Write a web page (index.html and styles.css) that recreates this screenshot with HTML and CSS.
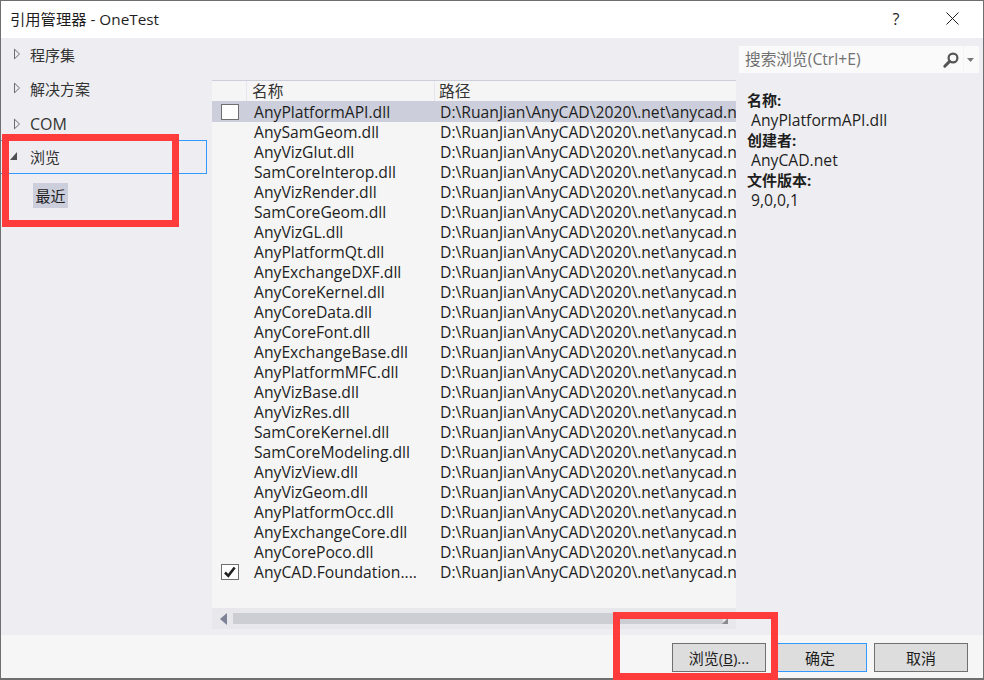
FILE: index.html
```html
<!DOCTYPE html>
<html lang="zh">
<head>
<meta charset="utf-8">
<title>引用管理器 - OneTest</title>
<link rel="stylesheet" href="styles.css">
</head>
<body>
<div class="window">
  <header class="titlebar">
    <span class="title">引用管理器 - OneTest</span>
    <span class="help">?</span>
    <svg class="close" width="13" height="13" viewBox="0 0 13 13"><path d="M.5 .5 12.500 12.500M12.500 .5 .5 12.500" stroke="#1e1e1e" stroke-width="1" fill="none"/></svg>
  </header>
  <div class="main">
    <nav class="nav">
      <div class="nav-item"><svg class="tri" width="8" height="12" viewBox="0 0 8 12"><path d="M1.500 1.200 6.500 6 1.500 10.800Z" fill="none" stroke="#6b6b6f"/></svg>程序集</div>
      <div class="nav-item"><svg class="tri" width="8" height="12" viewBox="0 0 8 12"><path d="M1.500 1.200 6.500 6 1.500 10.800Z" fill="none" stroke="#6b6b6f"/></svg>解决方案</div>
      <div class="nav-item nav-latin"><svg class="tri" width="8" height="12" viewBox="0 0 8 12"><path d="M1.500 1.200 6.500 6 1.500 10.800Z" fill="none" stroke="#6b6b6f"/></svg>COM</div>
      <div class="nav-item nav-active"><svg class="tri tri-open" width="8" height="12" viewBox="0 0 8 12"><path d="M0 10 7 10 7 2Z" fill="#505054"/></svg>浏览</div>
      <div class="nav-sub"><span class="recent">最近</span></div>
    </nav>
    <section class="list">
      <div class="thead"><span class="th-check"></span><span class="th-name">名称</span><span class="th-path">路径</span></div>
      <div class="rows">
        <div class="row row-sel"><span class="cell-check"><span class="box"></span></span><span class="cell-name">AnyPlatformAPI.dll</span><span class="cell-path">D:\RuanJian\AnyCAD\2020\.net\anycad.net</span></div>
        <div class="row"><span class="cell-check"></span><span class="cell-name">AnySamGeom.dll</span><span class="cell-path">D:\RuanJian\AnyCAD\2020\.net\anycad.net</span></div>
        <div class="row"><span class="cell-check"></span><span class="cell-name">AnyVizGlut.dll</span><span class="cell-path">D:\RuanJian\AnyCAD\2020\.net\anycad.net</span></div>
        <div class="row"><span class="cell-check"></span><span class="cell-name">SamCoreInterop.dll</span><span class="cell-path">D:\RuanJian\AnyCAD\2020\.net\anycad.net</span></div>
        <div class="row"><span class="cell-check"></span><span class="cell-name">AnyVizRender.dll</span><span class="cell-path">D:\RuanJian\AnyCAD\2020\.net\anycad.net</span></div>
        <div class="row"><span class="cell-check"></span><span class="cell-name">SamCoreGeom.dll</span><span class="cell-path">D:\RuanJian\AnyCAD\2020\.net\anycad.net</span></div>
        <div class="row"><span class="cell-check"></span><span class="cell-name">AnyVizGL.dll</span><span class="cell-path">D:\RuanJian\AnyCAD\2020\.net\anycad.net</span></div>
        <div class="row"><span class="cell-check"></span><span class="cell-name">AnyPlatformQt.dll</span><span class="cell-path">D:\RuanJian\AnyCAD\2020\.net\anycad.net</span></div>
        <div class="row"><span class="cell-check"></span><span class="cell-name">AnyExchangeDXF.dll</span><span class="cell-path">D:\RuanJian\AnyCAD\2020\.net\anycad.net</span></div>
        <div class="row"><span class="cell-check"></span><span class="cell-name">AnyCoreKernel.dll</span><span class="cell-path">D:\RuanJian\AnyCAD\2020\.net\anycad.net</span></div>
        <div class="row"><span class="cell-check"></span><span class="cell-name">AnyCoreData.dll</span><span class="cell-path">D:\RuanJian\AnyCAD\2020\.net\anycad.net</span></div>
        <div class="row"><span class="cell-check"></span><span class="cell-name">AnyCoreFont.dll</span><span class="cell-path">D:\RuanJian\AnyCAD\2020\.net\anycad.net</span></div>
        <div class="row"><span class="cell-check"></span><span class="cell-name">AnyExchangeBase.dll</span><span class="cell-path">D:\RuanJian\AnyCAD\2020\.net\anycad.net</span></div>
        <div class="row"><span class="cell-check"></span><span class="cell-name">AnyPlatformMFC.dll</span><span class="cell-path">D:\RuanJian\AnyCAD\2020\.net\anycad.net</span></div>
        <div class="row"><span class="cell-check"></span><span class="cell-name">AnyVizBase.dll</span><span class="cell-path">D:\RuanJian\AnyCAD\2020\.net\anycad.net</span></div>
        <div class="row"><span class="cell-check"></span><span class="cell-name">AnyVizRes.dll</span><span class="cell-path">D:\RuanJian\AnyCAD\2020\.net\anycad.net</span></div>
        <div class="row"><span class="cell-check"></span><span class="cell-name">SamCoreKernel.dll</span><span class="cell-path">D:\RuanJian\AnyCAD\2020\.net\anycad.net</span></div>
        <div class="row"><span class="cell-check"></span><span class="cell-name">SamCoreModeling.dll</span><span class="cell-path">D:\RuanJian\AnyCAD\2020\.net\anycad.net</span></div>
        <div class="row"><span class="cell-check"></span><span class="cell-name">AnyVizView.dll</span><span class="cell-path">D:\RuanJian\AnyCAD\2020\.net\anycad.net</span></div>
        <div class="row"><span class="cell-check"></span><span class="cell-name">AnyVizGeom.dll</span><span class="cell-path">D:\RuanJian\AnyCAD\2020\.net\anycad.net</span></div>
        <div class="row"><span class="cell-check"></span><span class="cell-name">AnyPlatformOcc.dll</span><span class="cell-path">D:\RuanJian\AnyCAD\2020\.net\anycad.net</span></div>
        <div class="row"><span class="cell-check"></span><span class="cell-name">AnyExchangeCore.dll</span><span class="cell-path">D:\RuanJian\AnyCAD\2020\.net\anycad.net</span></div>
        <div class="row"><span class="cell-check"></span><span class="cell-name">AnyCorePoco.dll</span><span class="cell-path">D:\RuanJian\AnyCAD\2020\.net\anycad.net</span></div>
        <div class="row"><span class="cell-check"><span class="box"><svg width="16" height="14" viewBox="0 0 16 14"><path d="M3 7.500 6.300 10.800 12.700 2.500" fill="none" stroke="#222" stroke-width="2.600"/></svg></span></span><span class="cell-name">AnyCAD.Foundation....</span><span class="cell-path">D:\RuanJian\AnyCAD\2020\.net\anycad.net</span></div>
      </div>
      <div class="hscroll">
        <svg class="arr" width="7" height="12" viewBox="0 0 7 12"><path d="M7 0 7 12 0 6Z" fill="#7d8296"/></svg>
        <div class="thumb"></div>
        <svg class="arr-r" width="6" height="6" viewBox="0 0 6 6"><path d="M0 6 6 6 6 0Z" fill="#8a8a8e"/></svg>
      </div>
    </section>
    <aside class="side">
      <div class="search">
        <span class="search-text">搜索浏览(Ctrl+E)</span>
        <svg class="lens" width="18" height="18" viewBox="0 0 18 18"><circle cx="11" cy="7" r="4.400" fill="none" stroke="#555" stroke-width="2.200"/><path d="M7.600 10.400 2.800 15.200" stroke="#555" stroke-width="3" stroke-linecap="round"/></svg>
        <span class="drop-area"><svg class="drop" width="7" height="4" viewBox="0 0 7 4"><path d="M0 0H7L3.500 4Z" fill="#777"/></svg></span>
      </div>
      <div class="info">
        <div class="label">名称:</div>
        <div class="value">AnyPlatformAPI.dll</div>
        <div class="label">创建者:</div>
        <div class="value">AnyCAD.net</div>
        <div class="label">文件版本:</div>
        <div class="value">9,0,0,1</div>
      </div>
    </aside>
  </div>
  <footer class="footer">
    <button class="btn">浏览(<u>B</u>)...</button>
    <button class="btn btn-ok">确定</button>
    <button class="btn">取消</button>
  </footer>
  <div class="mark mark-a"></div>
  <div class="mark mark-b"></div>
</div>
</body>
</html>
```

FILE: styles.css
```css
* { box-sizing: border-box; }
html, body { margin: 0; padding: 0; }
body { width: 984px; height: 680px; overflow: hidden; font-family: "Open Sans", "Noto Sans CJK SC", sans-serif; font-size: 15.7px; color: #1e1e1e; }
.window { position: relative; width: 984px; height: 680px; border: 1px solid #6f6f6f; border-bottom-width: 2px; display: flex; flex-direction: column; background: #eeeef2; }
.titlebar { height: 37px; flex: none; background: #fff; display: flex; align-items: center; padding: 0 0 2px 9px; }
.title { font-size: 15.3px; flex: 1; padding-bottom: 2px; }
.help { width: 16px; margin-right: 42px; font-size: 16px; text-align: center; }
.close { margin-right: 24px; }
.main { flex: 1; display: flex; min-height: 0; }
.nav { width: 211px; flex: none; font-size: 15px; }
.nav-item { height: 34px; width: 206px; display: flex; align-items: center; padding: 0 0 2px 12px; color: #333; }
.nav-latin { font-size: 16px; padding: 2px 0 0 12px; }
.tri { margin-right: 9px; flex: none; }
.tri-open { margin-left: -3px; margin-right: 12px; }
.nav-active { border: 1px solid #3399ff; border-left: 0; padding-left: 12px; }
.nav-sub { padding: 9px 0 0 32px; }
.recent { display: inline-block; background: #cccedb; padding: 0 2.500px; height: 25px; line-height: 27px; }
.list { width: 524px; flex: none; margin-top: 42px; background: #f5f5f5; display: flex; flex-direction: column; height: 549px; }
.thead { height: 22px; flex: none; background: #f5f5f5; border-top: 1px solid #cccedb; display: flex; line-height: 21px; }
.th-check { width: 35px; border-right: 1px solid #e5e5ec; }
.th-name { width: 188px; padding-left: 5px; border-right: 1px solid #e5e5ec; color: #333; }
.th-path { padding-left: 4px; color: #333; }
.rows { flex: 1; min-height: 0; }
.row { height: 20px; display: flex; align-items: center; white-space: nowrap; overflow: hidden; line-height: 20px; }
.row-sel { background: #cccedb; box-shadow: 0 -1px 0 #cccedb; overflow: visible; width: 524px; clip-path: inset(-1px 0 0 0); }
.cell-check { width: 42px; flex: none; display: flex; justify-content: flex-start; padding-left: 9px; }
.box { width: 18px; height: 16px; background: #fff; border: 1px solid #6f6f6f; display: flex; align-items: center; justify-content: center; }
.cell-name { width: 186px; flex: none; }
.cell-path { flex: none; }
.hscroll { height: 21px; flex: none; background: #e8e8ec; display: flex; align-items: center; padding: 0 13px 0 8px; position: relative; }
.arr { flex: none; margin-right: 6px; }
.thumb { flex: 1; height: 11px; background: #cdced3; }
.arr-r { position: absolute; right: 8px; top: 10px; }
.side { flex: 1; padding: 8px 4px 0 3px; }
.search { height: 27px; background: #fafafa; display: flex; align-items: center; padding-left: 6px; }
.search-text { flex: 1; color: #717171; padding-bottom: 2px; }
.lens { margin-right: 3px; }
.drop-area { width: 16px; height: 27px; border-left: 1px solid #f4f4f6; display: flex; align-items: center; padding-left: 3px; }
.info { padding: 17px 0 0 8px; }
.label { font-weight: 700; font-size: 15px; height: 20px; line-height: 20px; }
.value { height: 20px; line-height: 20px; padding-left: 4px; }
.footer { height: 43px; flex: none; background: #f6f6f6; display: flex; justify-content: flex-end; align-items: flex-start; gap: 7px; padding: 8px 15px 0 0; }
.btn { width: 94px; height: 29px; background: #dddddd; border: 1px solid #707070; font: inherit; font-size: 15px; color: #1e1e1e; padding: 0; }
.btn-ok { border-color: #3399ff; }
.mark { position: absolute; border: 7px solid #ff3b3b; }
.mark-a { left: 1px; top: 133px; width: 177px; height: 93px; }
.mark-b { left: 612px; top: 611px; width: 165px; height: 68px; }
```
